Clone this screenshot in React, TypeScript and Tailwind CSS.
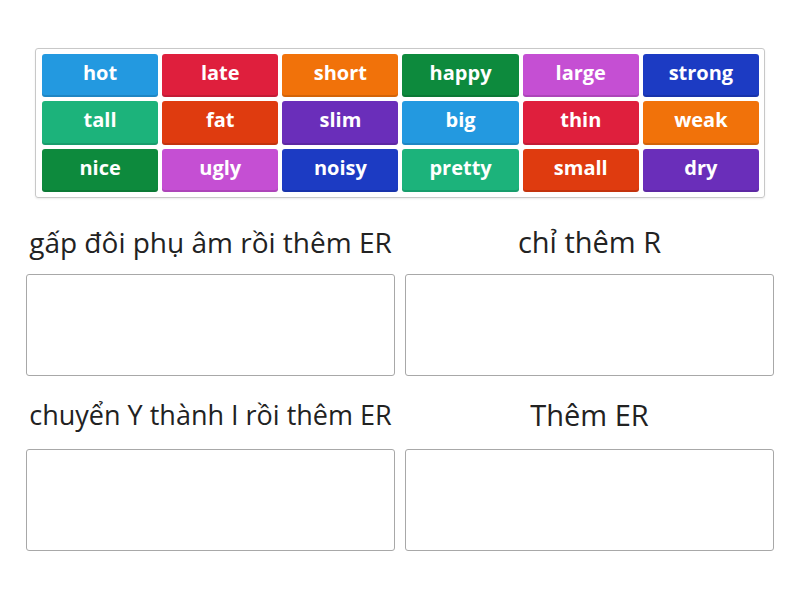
import React from "react";

const tiles: { t: string; c: string }[] = [
  { t: "hot", c: "bg-[#2399e0]" },
  { t: "late", c: "bg-[#df1f3d]" },
  { t: "short", c: "bg-[#f1720a]" },
  { t: "happy", c: "bg-[#0d8a3d]" },
  { t: "large", c: "bg-[#c54fd3]" },
  { t: "strong", c: "bg-[#1c3bc3]" },
  { t: "tall", c: "bg-[#1cb37b]" },
  { t: "fat", c: "bg-[#df3b0f]" },
  { t: "slim", c: "bg-[#6a2eba]" },
  { t: "big", c: "bg-[#2399e0]" },
  { t: "thin", c: "bg-[#df1f3d]" },
  { t: "weak", c: "bg-[#f1720a]" },
  { t: "nice", c: "bg-[#0d8a3d]" },
  { t: "ugly", c: "bg-[#c54fd3]" },
  { t: "noisy", c: "bg-[#1c3bc3]" },
  { t: "pretty", c: "bg-[#1cb37b]" },
  { t: "small", c: "bg-[#df3b0f]" },
  { t: "dry", c: "bg-[#6a2eba]" },
];

export default function App() {
  return (
    <div
      className="w-[800px] h-[600px] bg-white overflow-hidden"
      style={{ fontFamily: '"Open Sans", "Noto Sans", sans-serif' }}
    >
      <div className="pt-[48px] px-[35px]">
        <div className="h-[150px] border border-[#c8c8c8] rounded-[3px] p-[5px] pl-[6px] grid grid-cols-6 gap-[4px] shadow-[0_1px_2px_rgba(0,0,0,0.08)]">
          {tiles.map((x) => (
            <div
              key={x.t}
              className={`${x.c} rounded-[3px] flex items-center justify-center pb-[5px] text-white font-bold text-[20px] leading-none shadow-[inset_0_-2px_0_rgba(0,0,0,0.12)]`}
            >
              {x.t}
            </div>
          ))}
        </div>
      </div>
      <div className="px-[26px] grid grid-cols-2 gap-x-[10px]">
        <div className="mt-[26px] h-[36px] flex items-center justify-center text-[28px] text-[#222] whitespace-nowrap">
          gấp đôi phụ âm rồi thêm ER
        </div>
        <div className="mt-[26px] h-[36px] flex items-center justify-center text-[29px] text-[#222] whitespace-nowrap">
          chỉ thêm R
        </div>
        <div className="mt-[14px] h-[102px] border border-[#a8a8a8] rounded-[3px]" />
        <div className="mt-[14px] h-[102px] border border-[#a8a8a8] rounded-[3px]" />
        <div className="mt-[21px] h-[36px] flex items-center justify-center text-[27px] text-[#222] whitespace-nowrap">
          chuyển Y thành I rồi thêm ER
        </div>
        <div className="mt-[21px] h-[36px] flex items-center justify-center text-[29px] text-[#222] whitespace-nowrap">
          Thêm ER
        </div>
        <div className="mt-[16px] h-[102px] border border-[#a8a8a8] rounded-[3px]" />
        <div className="mt-[16px] h-[102px] border border-[#a8a8a8] rounded-[3px]" />
      </div>
    </div>
  );
}
